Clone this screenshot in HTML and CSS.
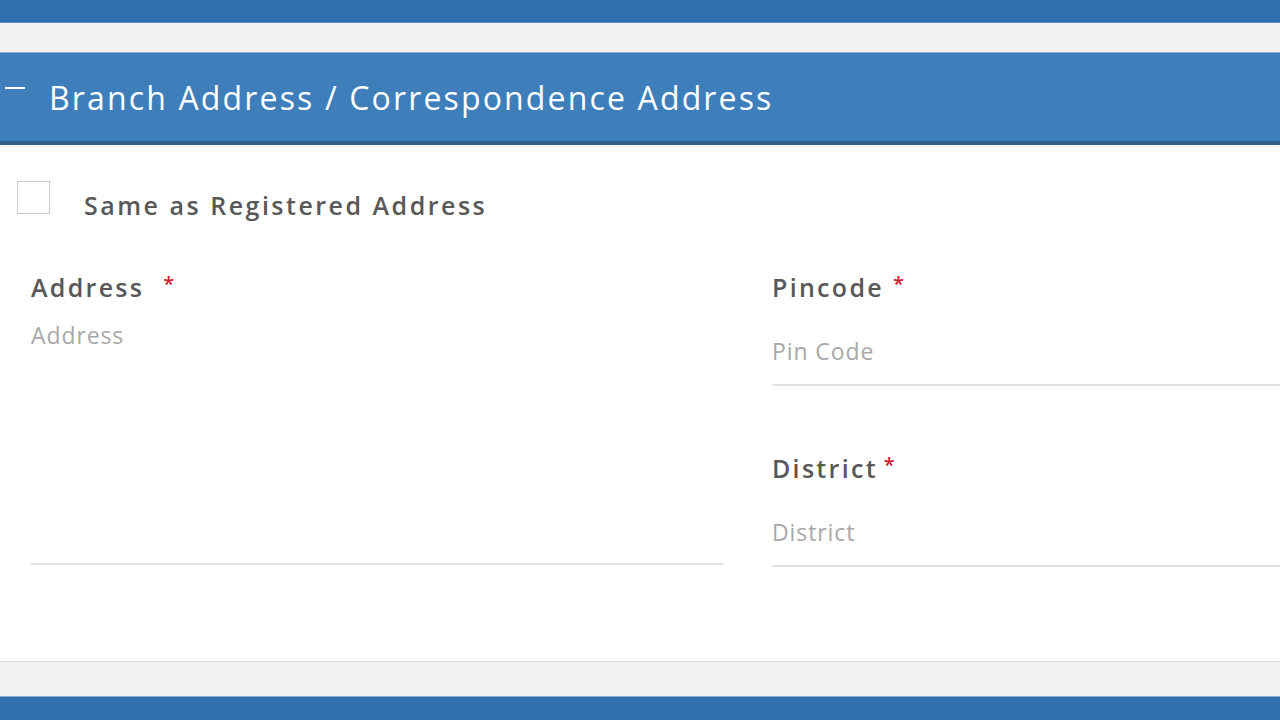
FILE: index.html
```html
<!DOCTYPE html>
<html>
<head>
<meta charset="utf-8">
<link rel="stylesheet" href="styles.css">
</head>
<body>
<div class="topbar"></div>
<div class="band"></div>
<section class="panel">
  <div class="panel-head">
    <span class="toggle"></span>
    <h2 class="panel-title">Branch Address / Correspondence Address</h2>
  </div>
  <div class="panel-body">
    <label class="same">
      <span class="checkbox"></span>
      <span class="same-text">Same as Registered Address</span>
    </label>
    <div class="fields">
      <div class="col col-left">
        <div class="field">
          <div class="label">Address<span class="req req-wide">*</span></div>
          <div class="input textarea">Address</div>
        </div>
      </div>
      <div class="col col-right">
        <div class="field">
          <div class="label">Pincode<span class="req">*</span></div>
          <div class="input">Pin Code</div>
        </div>
        <div class="field">
          <div class="label">District<span class="req req-narrow">*</span></div>
          <div class="input">District</div>
        </div>
      </div>
    </div>
  </div>
</section>
<div class="band band-bottom"></div>
<div class="topbar bottombar"></div>
</body>
</html>
```
FILE: styles.css
```css
html, body {
  margin: 0;
  padding: 0;
  width: 1280px;
  height: 720px;
  overflow: hidden;
  background: #f2f2f2;
  font-family: "Open Sans", "Liberation Sans", sans-serif;
}
.topbar {
  height: 22px;
  background: #326fad;
  border-bottom: 1px solid #5b8fc4;
}
.band {
  height: 29px;
  background: #f2f2f2;
  border-bottom: 1px solid #8bb0d6;
}
.panel {
  background: #fff;
}
.panel-head {
  height: 88px;
  background: #3d7ebb;
  border-bottom: 4px solid #335f8c;
  display: flex;
  align-items: center;
}
.toggle {
  width: 20px;
  height: 2px;
  background: #fff;
  margin-left: 5px;
  margin-right: 24px;
  align-self: flex-start;
  margin-top: 34px;
}
.panel-title {
  margin: 0;
  color: #fff;
  font-weight: 400;
  font-size: 32px;
  letter-spacing: 2.15px;
}
.panel-body {
  height: 517px;
  border-bottom: 1px solid #dcdcdc;
  box-sizing: border-box;
}
.same {
  display: flex;
  align-items: flex-start;
  padding: 36px 0 0 17px;
}
.checkbox {
  width: 31px;
  height: 31px;
  border: 1px solid #c8c8c8;
  background: #fff;
}
.same-text {
  margin-left: 34px;
  margin-top: 7px;
  font-size: 25px;
  font-weight: 600;
  color: #585858;
  letter-spacing: 2.5px;
}
.fields {
  display: flex;
  gap: 49px;
  padding-left: 31px;
  margin-top: 46px;
}
.col-left {
  width: 692px;
}
.col-right {
  flex: 1;
}
.field {
  display: flex;
  flex-direction: column;
}
.col-right .field + .field {
  margin-top: 63px;
}
.label {
  font-size: 25px;
  font-weight: 600;
  color: #585858;
  letter-spacing: 2.3px;
  line-height: 32px;
}
.req {
  color: #d0202e;
  font-size: 20px;
  vertical-align: 6px;
  margin-left: 9px;
  letter-spacing: 0;
}
.req-wide {
  margin-left: 19px;
}
.req-narrow {
  margin-left: 6px;
}
.input {
  font-size: 23px;
  color: #a8a8a8;
  font-weight: 400;
  letter-spacing: 0.9px;
  border-bottom: 2px solid #e2e2e2;
  padding-top: 34px;
  padding-bottom: 19px;
  line-height: 28px;
}
.textarea {
  padding-top: 18px;
  padding-bottom: 0;
  height: 242px;
}
.band-bottom {
  height: 34px;
  border-bottom: 1px solid #8bb0d6;
}
.bottombar {
  height: 30px;
  border-bottom: none;
}
```
